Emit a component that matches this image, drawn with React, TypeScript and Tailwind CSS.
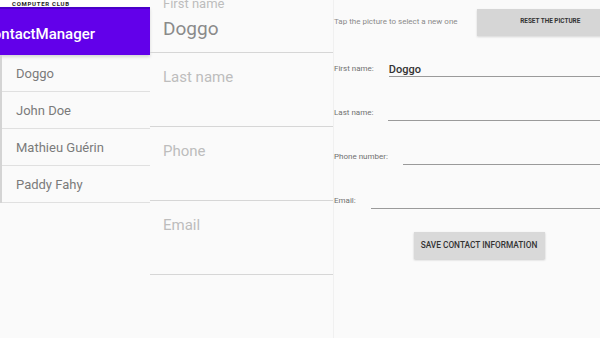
import React from 'react';

const contacts = ['Doggo', 'John Doe', 'Mathieu Guérin', 'Paddy Fahy'];

const tabletFields = [
    { label: 'First name', value: 'Doggo' },
    { label: 'Last name', value: '' },
    { label: 'Phone', value: '' },
    { label: 'Email', value: '' },
];

const formRows = [
    { label: 'First name:', value: 'Doggo' },
    { label: 'Last name:', value: '' },
    { label: 'Phone number:', value: '' },
    { label: 'Email:', value: '' },
];

export default function App() {
    return (
        <div className="w-[600px] h-[338px] overflow-hidden bg-[#fafafa] flex font-['Roboto',sans-serif]">
            {/* LIST SCREEN */}
            <div className="w-[150px] flex flex-col shrink-0">
                <div className="h-[7px] bg-white flex items-center pl-[12px]">
                    <span className="text-[6px] leading-none font-bold tracking-[0.12em] text-[#222]">COMPUTER CLUB</span>
                </div>
                <div className="h-[48px] bg-[#6200ea] border-t-2 border-[#4a00c8] flex items-center pt-[4px] overflow-hidden shadow-[0_2px_3px_rgba(0,0,0,0.15)]">
                    <span className="text-[15px] font-medium text-white whitespace-nowrap -ml-[17px]">ContactManager</span>
                </div>
                <div className="border-l-2 border-[#d4d4d4] flex flex-col">
                    {contacts.map(name => (
                        <div key={name} className="h-[37px] border-b border-[#e0e0e0] flex items-center pl-[14px] pt-[2px]">
                            <span className="text-[13px] text-[#7a7a7a]">{name}</span>
                        </div>
                    ))}
                </div>
            </div>

            {/* EDIT SCREEN */}
            <div className="w-[183px] shrink-0 flex flex-col -mt-[21px]">
                {tabletFields.map(f => (
                    <div key={f.label} className={f.value ? 'h-[74px] border-b border-[#d6d6d6] flex flex-col pl-[13px] pt-[17px]' : 'h-[74px] border-b border-[#d6d6d6] flex flex-col pl-[13px] pt-[14px]'}>
                        <span className={f.value ? 'text-[13px] leading-[16px] text-[#bdbdbd]' : 'text-[15px] leading-[20px] text-[#bdbdbd]'}>{f.label}</span>
                        {f.value && <span className="text-[19px] leading-[24px] mt-[5px] text-[#8a8a8a]">{f.value}</span>}
                    </div>
                ))}
            </div>

            {/* TABLET FORM */}
            <div className="w-[291px] shrink-0 flex flex-col border-l border-[#f0f0f0]">
                <div className="flex items-center h-[28px] mt-[8px]">
                    <span className="text-[8px] text-[#8a8a8a] w-[143px]">Tap the picture to select a new one</span>
                    <div className="w-[148px] h-[27px] bg-[#d6d6d6] flex items-center justify-center shadow-[0_1px_2px_rgba(0,0,0,0.15)]">
                        <span className="text-[6.4px] font-bold text-[#333]">RESET THE PICTURE</span>
                    </div>
                </div>
                <div className="flex flex-col mt-[27px] gap-[30px]">
                    {formRows.map(r => (
                        <div key={r.label} className="h-[14px] flex items-end">
                            <span className="text-[8px] text-[#707070] pb-[2px] whitespace-nowrap">{r.label}</span>
                            <div className="flex-1 border-b border-[#9a9a9a] ml-[15px] h-[14px] flex items-end">
                                <span className="text-[11px] leading-[13px] font-medium text-[#333]">{r.value}</span>
                            </div>
                        </div>
                    ))}
                </div>
                <div className="flex justify-center mt-[23px]">
                    <div className="w-[131px] h-[27px] bg-[#d9d9d9] flex items-center justify-center shadow-[0_1px_2px_rgba(0,0,0,0.2)]">
                        <span className="text-[8.3px] font-medium text-[#333]">SAVE CONTACT INFORMATION</span>
                    </div>
                </div>
            </div>
        </div>
    );
}
